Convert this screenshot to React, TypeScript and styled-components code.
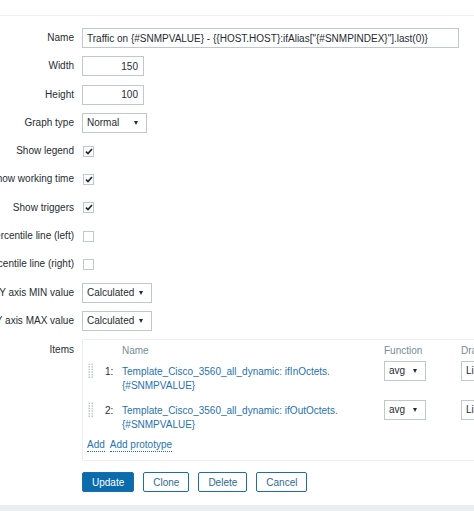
import React from "react";
import styled, { createGlobalStyle } from "styled-components";

const GlobalStyle = createGlobalStyle`
  html, body { margin: 0; padding: 0; background: #ffffff; }
  body {
    font-family: "Liberation Sans", Arial, sans-serif;
    font-size: 10px;
    color: #1f2c33;
    overflow: hidden;
  }
`;

const Page = styled.div`
  width: 474px;
  height: 511px;
  overflow: hidden;
  background: #ebeef0;
  display: flex;
  flex-direction: column;
`;

const TopBar = styled.div`
  flex: none;
  height: 15px;
  background: #ffffff;
  border-bottom: 1px solid #eceff1;
`;

const FormPanel = styled.div`
  flex: none;
  width: 640px;
  background: #ffffff;
  padding: 12px 0 13px 0;
`;

const FormGrid = styled.div`
  display: grid;
  grid-template-columns: 74px auto;
  column-gap: 8px;
  row-gap: 8.3px;
  align-items: center;
`;

const Label = styled.div<{ $top?: boolean }>`
  display: flex;
  justify-content: flex-end;
  align-items: center;
  white-space: nowrap;
  height: ${(p) => (p.$top ? "auto" : "20px")};
  align-self: ${(p) => (p.$top ? "start" : "center")};
  padding-top: ${(p) => (p.$top ? "5px" : "0")};
  line-height: 12px;
  color: #1f2c33;
`;

const Field = styled.div`
  display: flex;
  align-items: center;
  min-height: 20px;
`;

const TextInput = styled.input<{ $width: number; $right?: boolean; $size?: number }>`
  box-sizing: border-box;
  width: ${(p) => p.$width}px;
  height: 20px;
  border: 1px solid #bfc8ce;
  padding: 0 ${(p) => (p.$right ? "5px" : "4px")};
  margin: 0;
  font-family: inherit;
  font-size: ${(p) => p.$size ?? 10}px;
  color: #1f2c33;
  background: #ffffff;
  text-align: ${(p) => (p.$right ? "right" : "left")};
  outline: none;
`;

const SelectBox = styled.div<{ $width: number }>`
  box-sizing: border-box;
  display: inline-flex;
  align-items: center;
  width: ${(p) => p.$width}px;
  height: 20px;
  border: 1px solid #bfc8ce;
  padding: 0 8px 0 4px;
  background: #ffffff;
  color: #1f2c33;
  white-space: nowrap;
`;

const Arrow = styled.span`
  margin-left: auto;
  width: 0;
  height: 0;
  border-left: 2.5px solid transparent;
  border-right: 2.5px solid transparent;
  border-top: 4px solid #1f2c33;
`;

const CheckBox = styled.span`
  box-sizing: border-box;
  display: inline-flex;
  align-items: center;
  justify-content: center;
  width: 11px;
  height: 11px;
  margin-left: 1px;
  border: 1px solid #bfc8ce;
  background: #ffffff;
`;

const ItemsBox = styled.div`
  box-sizing: border-box;
  width: 560px;
  border: 1px solid #eceff1;
  padding: 4px 0 8px 4px;
`;

const TableRow = styled.div<{ $head?: boolean }>`
  display: grid;
  grid-template-columns: 18px 17px 262px 77px 1fr;
  align-items: start;
  line-height: 14px;
  color: ${(p) => (p.$head ? "#768d99" : "#1f2c33")};
  margin-bottom: ${(p) => (p.$head ? "3px" : "0")};
`;

const Rows = styled.div`
  display: flex;
  flex-direction: column;
  gap: 7px;
`;

const Handle = styled.div`
  padding-top: 2px;
  padding-left: 1px;
  height: 16px;
`;

const Num = styled.div`
  padding-top: 4px;
`;

const ItemLink = styled.a`
  padding-top: 4px;
  color: #1f72b3;
  text-decoration: none;
  line-height: 14px;
  display: block;
`;

const AddRow = styled.div`
  display: flex;
  gap: 5px;
  margin-top: 6px;
  line-height: 13px;
`;

const DottedLink = styled.a`
  color: #1f72b3;
  text-decoration: none;
  border-bottom: 1px dotted #1f72b3;
`;

const Buttons = styled.div`
  display: flex;
  gap: 9px;
  margin: 11px 0 0 82px;
`;

const Button = styled.button<{ $primary?: boolean }>`
  box-sizing: border-box;
  height: 20px;
  padding: 0 9px;
  margin: 0;
  font-family: inherit;
  font-size: 10px;
  border: 1px solid #1b6fa8;
  border-radius: 2px;
  background: ${(p) => (p.$primary ? "#0b6cad" : "#ffffff")};
  color: ${(p) => (p.$primary ? "#ffffff" : "#2c6a96")};
  cursor: pointer;
`;

const Check = () => (
  <svg width="8" height="7" viewBox="0 0 8 7">
    <path d="M1 3.6 L3 5.6 L7 1" fill="none" stroke="#1f2c33" strokeWidth="1.7" />
  </svg>
);

const Grip = () => (
  <svg width="6" height="16" viewBox="0 0 6 16">
    {[0, 1, 2, 3, 4, 5].map((r) =>
      [0, 3].map((c) => (
        <rect key={`${r}-${c}`} x={0.5 + c} y={0.5 + r * 2.6} width="1.5" height="1.5" fill="#bcc6cc" />
      ))
    )}
  </svg>
);

const Select = ({ value, width }: { value: string; width: number }) => (
  <SelectBox $width={width}>
    {value}
    <Arrow />
  </SelectBox>
);

const checks: [string, boolean][] = [
  ["Show legend", true],
  ["Show working time", true],
  ["Show triggers", true],
  ["Show percentile line (left)", false],
  ["Show percentile line (right)", false],
];

const items = [
  { n: "1:", name: "Template_Cisco_3560_all_dynamic: ifInOctets.", sub: "{#SNMPVALUE}" },
  { n: "2:", name: "Template_Cisco_3560_all_dynamic: ifOutOctets.", sub: "{#SNMPVALUE}" },
];

export default function App() {
  return (
    <>
      <GlobalStyle />
      <Page>
        <TopBar />
        <FormPanel>
          <FormGrid>
            <Label>Name</Label>
            <Field>
              <TextInput
                $width={377}
                $size={10}
                readOnly
                value={'Traffic on {#SNMPVALUE} - {{HOST.HOST}:ifAlias["{#SNMPINDEX}"].last(0)}'}
              />
            </Field>
            <Label>Width</Label>
            <Field>
              <TextInput $width={62} $right readOnly value="150" />
            </Field>
            <Label>Height</Label>
            <Field>
              <TextInput $width={62} $right readOnly value="100" />
            </Field>
            <Label>Graph type</Label>
            <Field>
              <Select value="Normal" width={65} />
            </Field>
            {checks.map(([label, on]) => (
              <React.Fragment key={label}>
                <Label>{label}</Label>
                <Field>
                  <CheckBox>{on && <Check />}</CheckBox>
                </Field>
              </React.Fragment>
            ))}
            <Label>Y axis MIN value</Label>
            <Field>
              <Select value="Calculated" width={70} />
            </Field>
            <Label>Y axis MAX value</Label>
            <Field>
              <Select value="Calculated" width={70} />
            </Field>
            <Label $top>Items</Label>
            <ItemsBox>
              <TableRow $head>
                <span />
                <span />
                <span>Name</span>
                <span>Function</span>
                <span>Draw style</span>
              </TableRow>
              <Rows>
                {items.map((it) => (
                  <TableRow key={it.n}>
                    <Handle>
                      <Grip />
                    </Handle>
                    <Num>{it.n}</Num>
                    <ItemLink href="#">
                      {it.name}
                      <br />
                      {it.sub}
                    </ItemLink>
                    <Select value="avg" width={42} />
                    <Select value="Line" width={70} />
                  </TableRow>
                ))}
              </Rows>
              <AddRow>
                <DottedLink href="#">Add</DottedLink>
                <DottedLink href="#">Add prototype</DottedLink>
              </AddRow>
            </ItemsBox>
          </FormGrid>
          <Buttons>
            <Button $primary>Update</Button>
            <Button>Clone</Button>
            <Button>Delete</Button>
            <Button>Cancel</Button>
          </Buttons>
        </FormPanel>
      </Page>
    </>
  );
}
